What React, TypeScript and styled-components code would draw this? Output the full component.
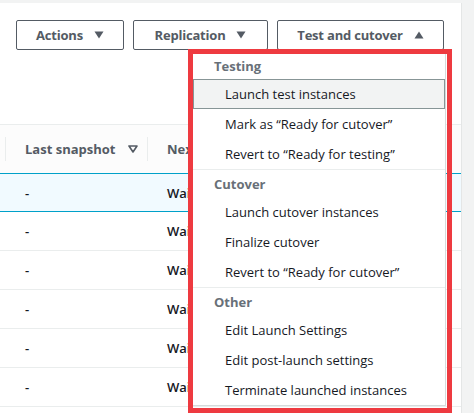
import React, { FC } from 'react';
import styled, { createGlobalStyle } from 'styled-components';

const GlobalStyle = createGlobalStyle`
    html, body {
        margin: 0;
        padding: 0;
        background: #f2f3f3;
        font-family: 'Open Sans', 'Noto Sans', sans-serif;
        color: #16191f;
        overflow: hidden;
    }
`;

interface IMenuGroup {
    title: string;
    items: string[];
}

const groups: IMenuGroup[] = [
    {
        title: 'Testing',
        items: ['Launch test instances', 'Mark as “Ready for cutover”', 'Revert to “Ready for testing”'],
    },
    {
        title: 'Cutover',
        items: ['Launch cutover instances', 'Finalize cutover', 'Revert to “Ready for cutover”'],
    },
    {
        title: 'Other',
        items: ['Edit Launch Settings', 'Edit post-launch settings', 'Terminate launched instances'],
    },
];

const rows = [true, false, false, false, false, false];

const Caret: FC<{ up?: boolean }> = ({ up }) => (
    <svg width="10" height="8" viewBox="0 0 10 8">
        {up ? <path d="M5 0.5 L9.5 7.5 H0.5 Z" fill="#545b64" /> : <path d="M0.5 0.5 H9.5 L5 7.5 Z" fill="#545b64" />}
    </svg>
);

const SortIcon = () => (
    <svg width="10" height="8" viewBox="0 0 10 8">
        <path d="M1 1 H9 L5 7 Z" fill="none" stroke="#545b64" strokeWidth="1.6" strokeLinejoin="round" />
    </svg>
);

const App: FC = () => {
    return (
        <>
            <GlobalStyle />
            <Page>
                <Card>
                    <Toolbar>
                        <Button width={108}>
                            <span>Actions</span>
                            <Caret />
                        </Button>
                        <Button width={135}>
                            <span>Replication</span>
                            <Caret />
                        </Button>
                        <MenuAnchor>
                            <Button width={167}>
                                <span>Test and cutover</span>
                                <Caret up />
                            </Button>
                            <Dropdown>
                                {groups.map((g, gi) => (
                                    <Group key={g.title} first={gi === 0}>
                                        <GroupTitle>{g.title}</GroupTitle>
                                        {g.items.map((item, ii) => (
                                            <MenuItem key={item} highlighted={gi === 0 && ii === 0}>
                                                {item}
                                            </MenuItem>
                                        ))}
                                    </Group>
                                ))}
                                <Annotation />
                            </Dropdown>
                        </MenuAnchor>
                    </Toolbar>
                    <Table>
                        <HeadRow>
                            <HeadCell />
                            <HeadCell>
                                <ColDivider />
                                <HeadLabel>
                                    <span>Last snapshot</span>
                                    <SortIcon />
                                </HeadLabel>
                            </HeadCell>
                            <HeadCell>
                                <ColDivider />
                                <HeadLabel>Next step</HeadLabel>
                            </HeadCell>
                        </HeadRow>
                        {rows.map((selected, i) => (
                            <Row key={i} selected={selected}>
                                <Cell />
                                <Cell>-</Cell>
                                <Cell>Waiting</Cell>
                            </Row>
                        ))}
                    </Table>
                </Card>
                <SideStrip />
            </Page>
        </>
    );
};

const Page = styled.div`
    display: flex;
    width: 474px;
    height: 413px;
    padding-top: 3px;
    box-sizing: border-box;
    overflow: hidden;
`;

const Card = styled.div`
    width: 462px;
    flex: 0 0 462px;
    box-sizing: border-box;
    background: #ffffff;
    border-right: 1px solid #e4e6e6;
    display: flex;
    flex-direction: column;
`;

const SideStrip = styled.div`
    flex: 1 0 0;
    background: #f2f3f3;
`;

const Toolbar = styled.div`
    display: flex;
    flex-shrink: 0;
    gap: 9px;
    padding: 17px 0 0 16px;
    height: 121px;
    box-sizing: border-box;
    align-items: flex-start;
`;

const Button = styled.div<{ width: number }>`
    width: ${(p) => p.width}px;
    height: 30px;
    box-sizing: border-box;
    border: 1px solid #545b64;
    border-radius: 2px;
    display: flex;
    align-items: center;
    justify-content: center;
    gap: 11px;
    font-size: 13px;
    font-weight: 700;
    letter-spacing: -0.2px;
    color: #545b64;
    white-space: nowrap;
    background: #fff;
    flex-shrink: 0;
`;

const MenuAnchor = styled.div`
    position: relative;
`;

const Dropdown = styled.div`
    position: absolute;
    top: 31px;
    right: -2px;
    width: 252px;
    background: #ffffff;
    border: 1px solid #d5dbdb;
    z-index: 5;
`;

const Group = styled.div<{ first?: boolean }>`
    border-top: ${(p) => (p.first ? 'none' : '1px solid #eaeded')};
`;

const GroupTitle = styled.div`
    height: 27px;
    display: flex;
    align-items: center;
    padding-left: 21px;
    font-size: 13px;
    font-weight: 700;
    color: #687078;
`;

const MenuItem = styled.div<{ highlighted?: boolean }>`
    height: 30px;
    box-sizing: border-box;
    display: flex;
    align-items: center;
    padding-left: ${(p) => (p.highlighted ? '31px' : '32px')};
    font-size: 13px;
    color: #16191f;
    white-space: nowrap;
    background: ${(p) => (p.highlighted ? '#f2f3f3' : 'transparent')};
    border: ${(p) => (p.highlighted ? '1px solid #879596' : 'none')};
`;

const Annotation = styled.div`
    position: absolute;
    left: -5px;
    top: -3px;
    width: 264px;
    height: 364px;
    border: 5px solid #ee3a40;
    box-sizing: border-box;
    pointer-events: none;
`;

const Table = styled.div`
    flex-shrink: 0;
    border-top: 1px solid #eaeded;
    display: flex;
    flex-direction: column;
`;

const gridCols = `
    display: grid;
    grid-template-columns: 5px 142px 1fr;
    flex-shrink: 0;
`;

const HeadRow = styled.div`
    ${gridCols};
    height: 48px;
    background: #fcfcfc;
    border-bottom: 1px solid #00a1c9;
`;

const HeadCell = styled.div`
    display: flex;
    align-items: center;
`;

const ColDivider = styled.div`
    width: 1px;
    height: 24px;
    background: #eaeded;
    flex-shrink: 0;
`;

const HeadLabel = styled.div`
    display: flex;
    align-items: center;
    gap: 13px;
    padding-left: 19px;
    font-size: 13px;
    font-weight: 700;
    color: #545b64;
    white-space: nowrap;
`;

const Row = styled.div<{ selected?: boolean }>`
    ${gridCols};
    height: ${(p) => (p.selected ? '38px' : '39px')};
    box-sizing: border-box;
    background: ${(p) => (p.selected ? '#f1faff' : '#ffffff')};
    border-bottom: 1px solid ${(p) => (p.selected ? '#00a1c9' : '#eaeded')};
`;

const Cell = styled.div`
    display: flex;
    align-items: center;
    padding-left: 20px;
    font-size: 13px;
    font-weight: 600;
    color: #16191f;
    white-space: nowrap;
    &:first-child {
        padding-left: 0;
    }
`;

export default App;
